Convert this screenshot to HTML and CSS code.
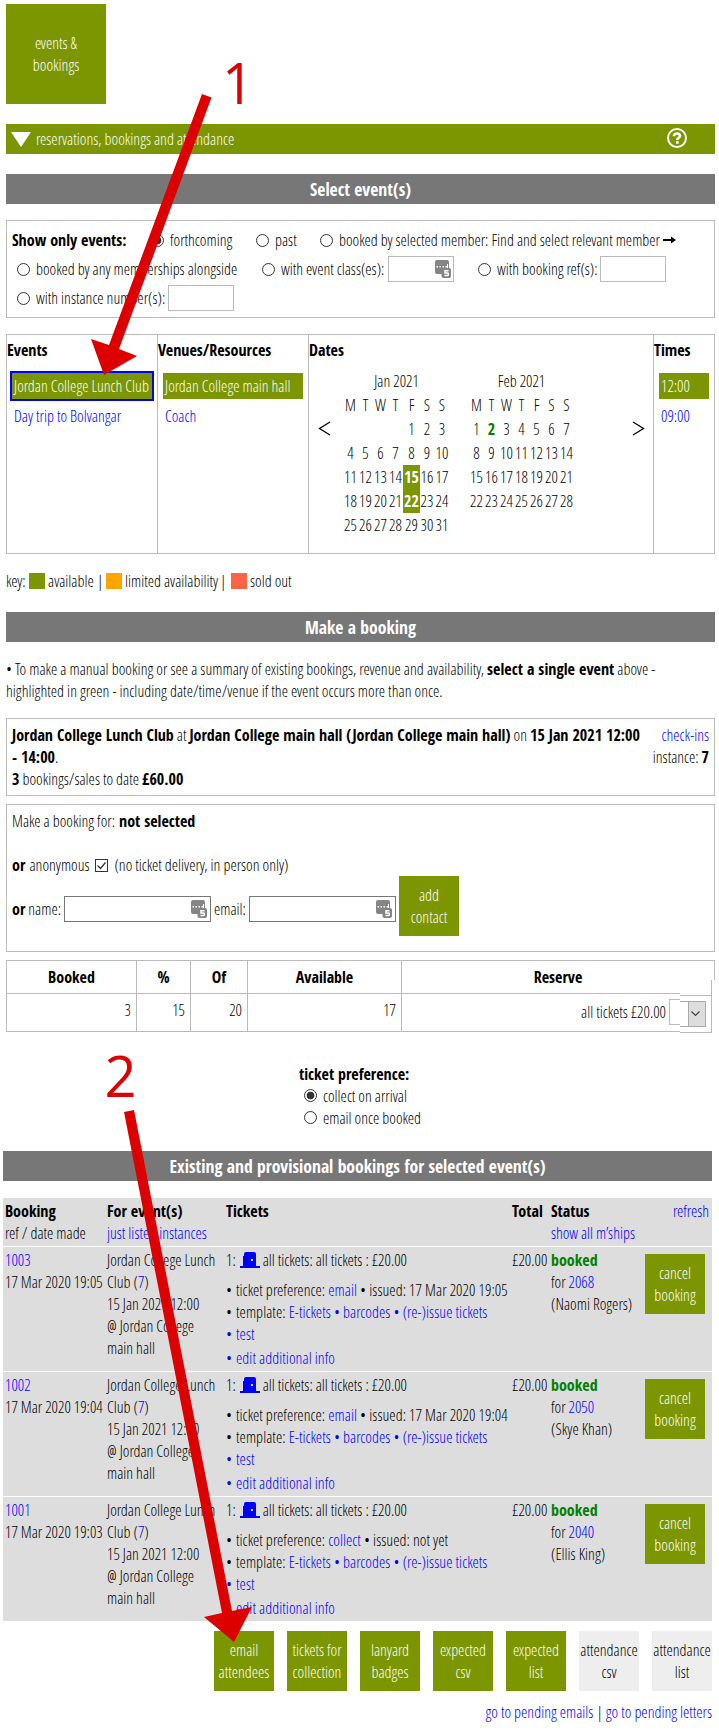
FILE: index.html
```html
<!DOCTYPE html>
<html lang="en">
<head>
<meta charset="utf-8">
<title>Events and bookings</title>
<link rel="stylesheet" href="styles.css">
</head>
<body>
<svg class="defs" aria-hidden="true">
  <symbol id="keypad" viewBox="0 0 16 18">
    <path fill="#858585" d="M2 0h10a2 2 0 0 1 2 2v7H9a2 2 0 0 0-2 2v3H2a2 2 0 0 1-2-2V2a2 2 0 0 1 2-2z"/>
    <rect fill="#858585" x="6.500" y="8" width="9.500" height="10" rx="2"/>
    <path fill="#fff" d="M1.500 6h1.500v1.500H1.500zM4.500 6H6v1.500H4.500zM7.500 6H9v1.500H7.500zM10.500 6H12v1.500h-1.500zM12 4h1v4h-1z"/>
    <path fill="none" stroke="#fff" stroke-width="1.500" d="M13.500 10.700H10v2.200h2.300c1.600 0 1.600 2.500 0 2.500H9.500"/>
  </symbol>
  <symbol id="door" viewBox="0 0 20 16">
    <path fill="#00f" d="M4 2a2 2 0 0 1 2-2h8a2 2 0 0 1 2 2v12h4v2H0v-2h3V4h1z"/>
    <rect fill="#ddd" x="11" y="7" width="2" height="2"/>
  </symbol>
</svg>
<main class="page">
  <a class="tile tile-big">events &amp;<br>bookings</a>
  <div class="section-bar">
    <svg class="tri" viewBox="0 0 20 15"><path fill="#fff" d="M0 0h20L10 15z"/></svg>
    <span>reservations, bookings and attendance</span>
    <svg class="help" viewBox="0 0 20 20"><circle cx="10" cy="10" r="9" fill="none" stroke="#fff" stroke-width="2"/><path d="M7 8.200C7 4.600 13 4.700 13 7.900c0 2-2.700 2-2.700 4.100" fill="none" stroke="#fff" stroke-width="2.600"/><rect x="8.900" y="13.200" width="2.800" height="2.500" fill="#fff"/></svg>
  </div>
  <h2 class="bar">Select event(s)</h2>

  <section class="filters">
    <div class="frow"><b class="flabel">Show only events:</b><i class="radio on"></i><span class="w1">forthcoming</span><i class="radio"></i><span class="w2">past</span><i class="radio"></i><span>booked by selected member: Find and select relevant member</span><svg class="arr" viewBox="0 0 13 8"><path d="M0 3h8V.500L13 4 8 7.500V5H0z"/></svg></div>
    <div class="frow mid ind"><i class="radio"></i><span class="w3">booked by any memberships alongside</span><i class="radio"></i><span class="w4">with event class(es):</span><span class="box"><svg class="kp"><use href="#keypad"/></svg></span><i class="radio gapl"></i><span class="w5">with booking ref(s):</span><span class="box"></span></div>
    <div class="frow ind"><i class="radio"></i><span class="w6">with instance number(s):</span><span class="box"></span></div>
  </section>

  <section class="picker">
    <div class="col"><b>Events</b><a class="pick sel focus">Jordan College Lunch Club</a><a class="pick">Day trip to Bolvangar</a></div>
    <div class="col"><b>Venues/Resources</b><a class="pick sel">Jordan College main hall</a><a class="pick">Coach</a></div>
    <div class="col"><b>Dates</b>
      <div class="cals">
        <svg class="nav" viewBox="0 0 13 15"><path d="M12 1L1.500 7.500 12 14"/></svg>
        <div class="cal jan"><span class="month">Jan 2021</span>
          <span>M</span><span>T</span><span>W</span><span>T</span><span>F</span><span>S</span><span>S</span>
          <span></span><span></span><span></span><span></span><span>1</span><span>2</span><span>3</span>
          <span>4</span><span>5</span><span>6</span><span>7</span><span>8</span><span>9</span><span>10</span>
          <span>11</span><span>12</span><span>13</span><span>14</span><b class="hit">15</b><span>16</span><span>17</span>
          <span>18</span><span>19</span><span>20</span><span>21</span><b class="hit">22</b><span>23</span><span>24</span>
          <span>25</span><span>26</span><span>27</span><span>28</span><span>29</span><span>30</span><span>31</span></div>
        <div class="cal feb"><span class="month">Feb 2021</span>
          <span>M</span><span>T</span><span>W</span><span>T</span><span>F</span><span>S</span><span>S</span>
          <span>1</span><b class="ok">2</b><span>3</span><span>4</span><span>5</span><span>6</span><span>7</span>
          <span>8</span><span>9</span><span>10</span><span>11</span><span>12</span><span>13</span><span>14</span>
          <span>15</span><span>16</span><span>17</span><span>18</span><span>19</span><span>20</span><span>21</span>
          <span>22</span><span>23</span><span>24</span><span>25</span><span>26</span><span>27</span><span>28</span></div>
        <svg class="nav" viewBox="0 0 13 15"><path d="M1 1l10.500 6.500L1 14"/></svg>
      </div>
    </div>
    <div class="col"><b>Times</b><a class="pick sel">12:00</a><a class="pick">09:00</a></div>
  </section>

  <div class="key"><span class="k0">key:</span><i class="sw green"></i><span class="k1">available</span><span class="k2">|</span><i class="sw orange"></i><span class="k3">limited availability</span><span class="k4">|</span><i class="sw red"></i><span>sold out</span></div>

  <h2 class="bar">Make a booking</h2>
  <p class="note">• To make a manual booking or see a summary of existing bookings, revenue and availability, <b>select a single event</b> above -<br>highlighted in green - including date/time/venue if the event occurs more than once.</p>

  <section class="summary">
    <div><b>Jordan College Lunch Club</b> at <b>Jordan College main hall (Jordan College main hall)</b> on <b>15 Jan 2021 12:00<br>- 14:00</b>.<br><b>3</b> bookings/sales to date <b>£60.00</b></div>
    <div class="right"><a>check-ins</a><br>instance: <b>7</b></div>
  </section>

  <section class="contact">
    <div class="line">Make a booking for:&nbsp;<b>not selected</b></div>
    <div class="line anon"><b>or</b>&nbsp;<span class="c1">anonymous</span><svg class="check" viewBox="0 0 13 13"><rect x=".500" y=".500" width="12" height="12" fill="#fff" stroke="#333"/><path d="M2.500 6.500l3 3 5-6" fill="none" stroke="#333" stroke-width="1.300"/></svg><span>(no ticket delivery, in person only)</span></div>
    <div class="line form"><span class="c2"><b>or</b> name:</span><span class="box wide"><svg class="kp"><use href="#keypad"/></svg></span><span class="c3">email:</span><span class="box wide"><svg class="kp"><use href="#keypad"/></svg></span><a class="tile add">add<br>contact</a></div>
  </section>

  <section class="stock">
    <div class="cell th">Booked</div><div class="cell th">%</div><div class="cell th">Of</div><div class="cell th">Available</div><div class="cell th last">Reserve</div>
    <div class="cell">3</div><div class="cell">15</div><div class="cell">20</div><div class="cell">17</div><div class="cell last res"><span>all tickets £20.00</span><span class="selbox"></span></div>
    <div class="patch"><div class="patch-top"></div><div class="patch-in"><div class="drop"><svg viewBox="0 0 9 6"><path d="M.500 .500l4 4 4-4"/></svg></div></div></div>
  </section>

  <section class="pref"><b>ticket preference:</b><div><i class="radio on"></i>collect on arrival</div><div><i class="radio"></i>email once booked</div></section>

  <section class="existing">
    <h2 class="bar">Existing and provisional bookings for selected event(s)</h2>
    <div class="row head"><div><b>Booking</b><br>ref / date made</div><div><b>For event(s)</b><br><a>just listed instances</a></div><div><b>Tickets</b></div><div><b>Total</b></div><div><b>Status</b><br><a>show all m’ships</a></div><div class="ref"><a>refresh</a></div></div>
    <div class="row"><div><a>1003</a><br>17 Mar 2020 19:05</div><div>Jordan College Lunch<br>Club (<a>7</a>)<br>15 Jan 2021 12:00<br>@ Jordan College<br>main hall</div><div><div class="tk"><span>1:</span><svg class="door"><use href="#door"/></svg><span>all tickets: all tickets : £20.00</span></div><ul><li>ticket preference: <a>email</a> • issued: 17 Mar 2020 19:05</li><li>template: <a>E-tickets • barcodes • (re-)issue tickets</a></li><li class="lk">test</li><li class="lk more">edit additional info</li></ul></div><div>£20.00</div><div><b class="ok">booked</b><br>for <a>2068</a><br>(Naomi Rogers)</div><div class="act"><a class="tile">cancel<br>booking</a></div></div>
    <div class="row"><div><a>1002</a><br>17 Mar 2020 19:04</div><div>Jordan College Lunch<br>Club (<a>7</a>)<br>15 Jan 2021 12:00<br>@ Jordan College<br>main hall</div><div><div class="tk"><span>1:</span><svg class="door"><use href="#door"/></svg><span>all tickets: all tickets : £20.00</span></div><ul><li>ticket preference: <a>email</a> • issued: 17 Mar 2020 19:04</li><li>template: <a>E-tickets • barcodes • (re-)issue tickets</a></li><li class="lk">test</li><li class="lk more">edit additional info</li></ul></div><div>£20.00</div><div><b class="ok">booked</b><br>for <a>2050</a><br>(Skye Khan)</div><div class="act"><a class="tile">cancel<br>booking</a></div></div>
    <div class="row"><div><a>1001</a><br>17 Mar 2020 19:03</div><div>Jordan College Lunch<br>Club (<a>7</a>)<br>15 Jan 2021 12:00<br>@ Jordan College<br>main hall</div><div><div class="tk"><span>1:</span><svg class="door"><use href="#door"/></svg><span>all tickets: all tickets : £20.00</span></div><ul><li>ticket preference: <a>collect</a> • issued: not yet</li><li>template: <a>E-tickets • barcodes • (re-)issue tickets</a></li><li class="lk">test</li><li class="lk more">edit additional info</li></ul></div><div>£20.00</div><div><b class="ok">booked</b><br>for <a>2040</a><br>(Ellis King)</div><div class="act"><a class="tile">cancel<br>booking</a></div></div>
    <div class="buttons"><a class="tile">email<br>attendees</a><a class="tile">tickets for<br>collection</a><a class="tile">lanyard<br>badges</a><a class="tile">expected<br>csv</a><a class="tile">expected<br>list</a><a class="tile off">attendance<br>csv</a><a class="tile off">attendance<br>list</a></div>
    <div class="foot"><a>go to pending emails</a> | <a>go to pending letters</a></div>
  </section>

  <svg class="notes" viewBox="0 0 719 1733">
    <path d="M202 94l9.500 3.500L119 349l18 7-33 19-13-36 18 6z"/>
    <path d="M124 1112l10-2L232 1611l20-4-18 35-30-25 18-4z"/>
    <text x="222" y="104">1</text><text x="104.500" y="1097">2</text>
  </svg>
</main>
</body>
</html>
```
FILE: styles.css
```css
* { box-sizing: border-box; }
body { margin: 0; background: #fff; color: #000; font: 300 16px/22px "Open Sans Condensed Light", "Open Sans", "Noto Sans", sans-serif; }
b, .bar, .th { font-family: "Open Sans Condensed", "Open Sans", "Noto Sans", sans-serif; font-weight: 700; }
a { color: #00f; }
svg { flex: none; }
.defs { display: none; }
.page { position: relative; width: 719px; height: 1733px; padding: 4px 4px 0 6px; overflow: hidden; white-space: nowrap; }
.tile { display: flex; flex: none; align-items: center; justify-content: center; width: 60px; height: 60px; background: #7b9600; color: #fff; text-align: center; }
.tile-big { width: 100px; height: 100px; }
.tile.off { background: #eee; color: #000; }
.section-bar { display: flex; align-items: center; height: 30px; margin-top: 20px; padding: 0 28px 0 5px; background: #7b9600; color: #fff; }
.tri { width: 20px; height: 15px; margin-right: 5px; }
.help { width: 20px; height: 20px; margin: -3px 0 0 auto; }
.bar { height: 30px; margin: 20px 0 0; background: #777; color: #fff; font-size: 17.6px; line-height: 30px; text-align: center; }

.filters { height: 98px; margin-top: 16px; padding: 5px 5px 0; border: 1px solid #bbb; }
.frow { display: flex; align-items: center; height: 28px; }
.mid { height: 30px; }
.ind { padding-left: 5px; }
.flabel { width: 139px; }
.radio { flex: none; display: inline-block; width: 13px; height: 13px; margin-right: 6px; border: 1px solid #333; border-radius: 50%; background: #fff; }
.radio.on { background: radial-gradient(circle, #333 0 3.500px, #fff 4.200px); }
.w1, .w2, .w3, .w4, .w5, .w6 { flex: none; }
.w1 { width: 86px; } .w2 { width: 45px; } .w3 { width: 226px; } .w4 { width: 107px; } .w5 { width: 103px; } .w6 { width: 132px; }
.arr { width: 13px; height: 8px; margin-left: 3px; }
.box { display: flex; flex: none; align-items: center; justify-content: flex-end; width: 66px; height: 26px; border: 1px solid #bbb; background: #fff; }
.gapl { margin-left: 24px; }
.kp { width: 16px; height: 18px; margin-right: 2px; }

.picker { display: grid; grid-template-columns: 150px 151px 345px 61px; height: 220px; margin-top: 16px; border: 1px solid #bbb; }
.col { padding-top: 3px; border-left: 1px solid #bbb; }
.col:first-child { border-left: 0; }
.col > b { display: block; height: 24px; line-height: 24px; }
.pick { display: block; height: 26px; margin: 4px 5px 0; padding-left: 2px; line-height: 26px; }
.col .sel { margin-top: 11px; background: #7b9600; color: #fff; }
.col .focus { outline: 2px solid #00f; }
.cals { display: flex; margin-top: 7px; padding-left: 9px; }
.nav { width: 13px; height: 15px; margin-top: 52px; fill: none; stroke: #000; stroke-width: 1.300; }
.cal { display: grid; grid-template-columns: repeat(4, 15px) 17px 14px 16px; grid-auto-rows: 24px; line-height: 24px; text-align: center; }
.jan { margin-left: 12px; }
.feb { margin: 0 58px 0 19px; grid-template-columns: repeat(7, 15px); }
.month { grid-column: 1 / -1; }
.hit { background: #7b9600; color: #fff; }
.ok { color: #008000; }

.key { display: flex; align-items: center; height: 22px; margin: 16px 0 0; }
.sw { width: 16px; height: 16px; margin-right: 3px; }
.green { background: #7b9600; } .orange { background: #ffa500; } .red { background: #ff6347; }
.k0 { width: 23px; } .k1 { width: 49px; } .k2 { width: 9px; } .k3 { width: 95px; } .k4 { width: 11px; }
.note { margin: 16px 0 0; letter-spacing: .03px; }

.summary { display: flex; justify-content: space-between; height: 78px; margin-top: 16px; padding: 5px; border: 1px solid #bbb; }
.right { text-align: right; }
.contact { height: 148px; margin-top: 8px; padding: 5px; border: 1px solid #bbb; }
.line { display: flex; align-items: center; height: 22px; }
.anon { margin-top: 22px; }
.c1 { width: 66px; } .check { width: 13px; height: 13px; margin-right: 6px; }
.form { height: 60px; margin-top: 0; }
.form > span { margin-top: 6px; }
.c2 { width: 52px; } .c3 { width: 38px; padding-left: 3px; }
.wide { width: 147px; border-color: #777; }
.wide .kp { margin-right: 3px; }
.add { margin-left: 3px; }

.stock { position: relative; display: grid; grid-template-columns: 130px 54px 57px 154px 314px; grid-template-rows: 33px 38px; margin-top: 8px; border-bottom: 1px solid #bbb; }
.cell { border-left: 1px solid #bbb; border-top: 1px solid #bbb; padding: 5px 5px 0; text-align: right; }
.th { text-align: center; }
.last { border-right: 1px solid #bbb; }
.res { display: flex; align-items: flex-start; justify-content: flex-end; padding: 5px 34px 0 0; }
.res > span:first-child { padding-top: 2px; }
.selbox { width: 11px; height: 26px; margin-left: 3px; border: 1px solid #bbb; border-right: 0; }
.patch { position: absolute; right: 0; top: 20px; width: 35px; height: 54px; background: #fff; }
.patch-top { width: 32px; height: 16px; border-right: 1px solid #bbb; border-bottom: 1px solid #bbb; }
.patch-in { width: 32px; height: 37px; padding-top: 5px; border-right: 1px solid #bbb; border-bottom: 1px solid #bbb; }
.drop { display: flex; align-items: center; justify-content: flex-end; width: 26px; height: 26px; padding-right: 5px; border: 1px solid #aaa; border-left: 0; background: linear-gradient(90deg, #fff 8px, #aaa 8px, #aaa 9px, #ddd 9px); }
.drop svg { width: 9px; height: 6px; fill: none; stroke: #444; stroke-width: 1.200; }

.pref { display: flex; flex-direction: column; margin: 31px 0 0 293px; }
.pref div { display: flex; align-items: center; padding-left: 5px; }
.pref .radio { margin: -2px 6px 0 0; }
.existing { margin: 22px 3px 0 -3px; }
.row { display: grid; grid-template-columns: 102px 119px 286px 39px 90px 1fr; height: 124px; margin-top: 1px; padding: 2px 3px 0 2px; background: #ddd; }
.row.head { height: 48px; margin-top: 17px; }
.ref { text-align: right; }
.act { padding: 5px 0 0 4px; }
.tk { display: flex; }
.door { width: 20px; height: 16px; margin: 3px 3px 0 4px; }
ul { margin: 8px 0 0; padding: 0; list-style: none; letter-spacing: .05px; }
li::before { content: "•"; display: inline-block; width: 10px; }
.lk { color: #00f; }
.more { margin-top: 2px; }
.buttons { display: flex; justify-content: flex-end; gap: 13px; margin-top: 10px; }
.foot { margin-top: 10px; text-align: right; }
.notes { position: absolute; left: 0; top: 0; width: 719px; height: 1733px; fill: #d00; pointer-events: none; }
.notes text { font: 400 56px "Open Sans", sans-serif; }
```
